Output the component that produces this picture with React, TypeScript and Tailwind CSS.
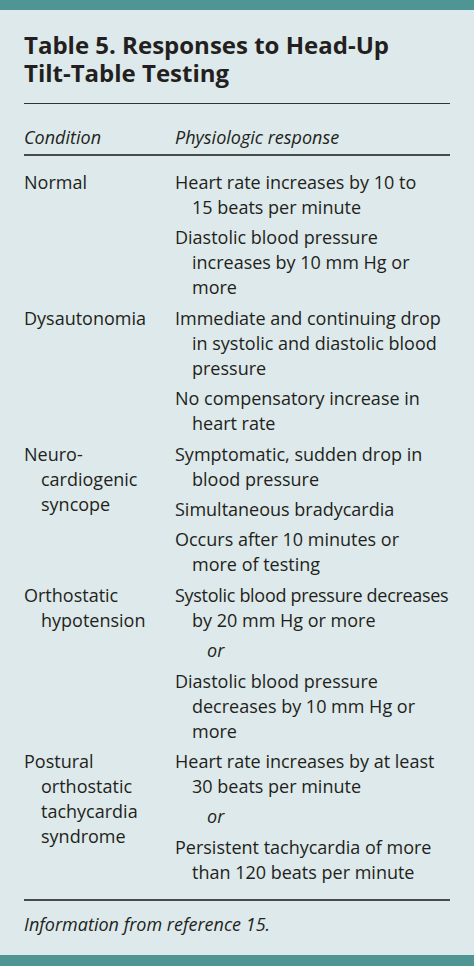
const rows: { condition: string[]; responses: string[][] }[] = [
  {
    condition: ["Normal"],
    responses: [
      ["Heart rate increases by 10 to", "15 beats per minute"],
      ["Diastolic blood pressure", "increases by 10 mm Hg or", "more"],
    ],
  },
  {
    condition: ["Dysautonomia"],
    responses: [
      ["Immediate and continuing drop", "in systolic and diastolic blood", "pressure"],
      ["No compensatory increase in", "heart rate"],
    ],
  },
  {
    condition: ["Neuro-", "cardiogenic", "syncope"],
    responses: [
      ["Symptomatic, sudden drop in", "blood pressure"],
      ["Simultaneous bradycardia"],
      ["Occurs after 10 minutes or", "more of testing"],
    ],
  },
  {
    condition: ["Orthostatic", "hypotension"],
    responses: [
      ["Systolic blood pressure decreases", "by 20 mm Hg or more"],
      ["or"],
      ["Diastolic blood pressure", "decreases by 10 mm Hg or", "more"],
    ],
  },
  {
    condition: ["Postural", "orthostatic", "tachycardia", "syndrome"],
    responses: [
      ["Heart rate increases by at least", "30 beats per minute"],
      ["or"],
      ["Persistent tachycardia of more", "than 120 beats per minute"],
    ],
  },
];

function Lines({ lines }: { lines: string[] }) {
  if (lines.length === 1 && lines[0] === "or") {
    return <div className="pl-[32px] italic">or</div>;
  }
  return (
    <div className="whitespace-nowrap">
      {lines.map((line, i) => (
        <div
          key={i}
          className={`${i > 0 ? "pl-[17px]" : ""} ${line.length > 32 ? "tracking-[-0.3px]" : ""}`}
        >
          {line}
        </div>
      ))}
    </div>
  );
}

export default function App() {
  return (
    <div className="w-[474px] h-[966px] bg-[#dde9ea] flex flex-col text-[#231f20] font-['Open_Sans',sans-serif]">
      <div className="h-[10px] bg-[#4f9594]" />
      <div className="flex-1 px-6 pt-[21px]">
        <h1 className="text-[24px] leading-[28px] font-bold">
          <div>Table 5. Responses to Head-Up</div>
          <div>Tilt-Table Testing</div>
        </h1>
        <div className="mt-[16px] h-px bg-[#333]" />
        <div className="grid grid-cols-[151px_1fr] pt-[21px] pb-[4px] text-[18px] leading-[25px] italic">
          <div>Condition</div>
          <div>Physiologic response</div>
        </div>
        <div className="h-[2px] bg-[#4a4a4a]" />
        <div className="mt-[14px] flex flex-col gap-[5.4px] text-[18px] leading-[25px]">
          {rows.map((row, r) => (
            <div key={r} className="grid grid-cols-[151px_1fr]">
              <Lines lines={row.condition} />
              <div className="flex flex-col gap-[5.4px]">
                {row.responses.map((resp, i) => (
                  <Lines key={i} lines={resp} />
                ))}
              </div>
            </div>
          ))}
        </div>
        <div className="mt-[14px] h-[2px] bg-[#4a4a4a]" />
        <div className="mt-[11px] text-[18px] leading-[25px] italic">
          Information from reference 15.
        </div>
      </div>
      <div className="h-[11px] bg-[#4f9594]" />
    </div>
  );
}
